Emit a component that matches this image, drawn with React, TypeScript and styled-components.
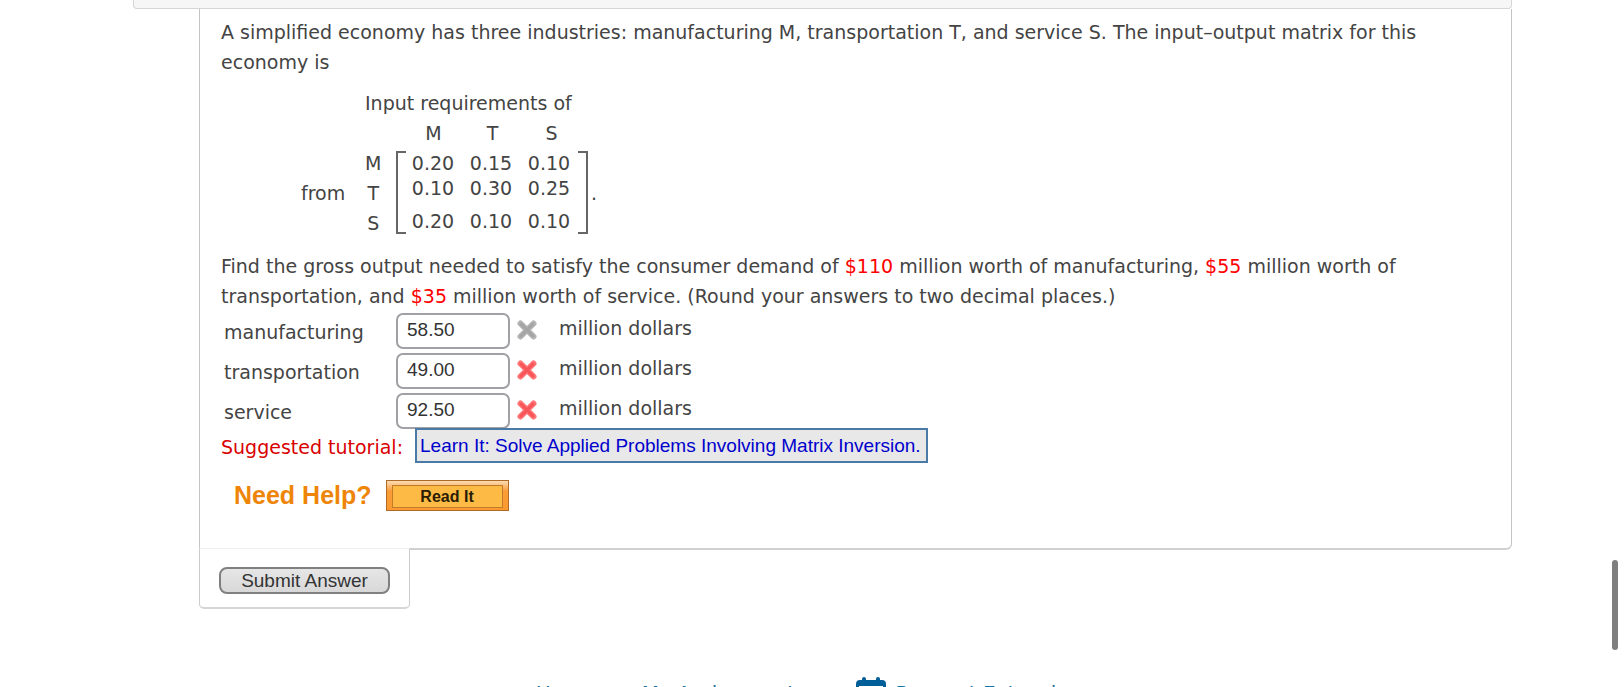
import React from "react";
import styled, { createGlobalStyle } from "styled-components";

const GlobalStyle = createGlobalStyle`
  * { box-sizing: border-box; }
  body {
    margin: 0;
    height: 100vh;
    overflow: hidden;
    background: #fff;
    color: #444;
    font-family: "DejaVu Sans", Verdana, sans-serif;
    font-size: 19px;
    line-height: 30px;
  }
`;

const Page = styled.main`
  padding: 0 112px 0 133px;
`;

const HeaderBar = styled.div`
  height: 9px;
  background: #f6f6f6;
  border: 1px solid #d6d6d6;
  border-top: 0;
  border-radius: 0 0 4px 4px;
`;

const Question = styled.section`
  margin-left: 66px;
`;

const Panel = styled.div`
  padding: 8px 21px 37px;
  border: 1px solid #c4c4c4;
  border-top: 0;
  border-bottom: 2px solid #d0d0d0;
  border-radius: 0 0 6px 0;
`;

const Paragraph = styled.p`
  margin: 0;
`;

const Amount = styled.span`
  color: #f00;
`;

const Matrix = styled.div`
  display: grid;
  grid-template-columns: 64px 31px 192px auto;
  margin: 11px 0 13px 80px;
`;

const MatrixCaption = styled.div`
  grid-column: 2 / -1;
`;

const ColumnHeads = styled.div`
  grid-column: 3;
  display: grid;
  grid-template-columns: repeat(3, 59px);
  padding-left: 8px;
  text-align: center;
`;

const FromLabel = styled.div`
  grid-column: 1;
  align-self: center;
`;

const RowHeads = styled.div`
  display: grid;
  grid-template-rows: repeat(3, 30px);
  width: 15px;
  text-align: center;
`;

const Brackets = styled.div`
  display: flex;
  justify-content: center;
  margin: 3px 0 4px;
  padding-right: 2px;
  background:
    linear-gradient(#666, #666) left top / 8px 2px no-repeat,
    linear-gradient(#666, #666) left bottom / 8px 2px no-repeat,
    linear-gradient(#666, #666) right top / 8px 2px no-repeat,
    linear-gradient(#666, #666) right bottom / 8px 2px no-repeat;
  border: solid #666;
  border-width: 0 2px;
`;

const Values = styled.table`
  border-collapse: collapse;
  line-height: 25px;
  td {
    width: 58px;
    padding: 0;
    text-align: center;
  }
  tr:last-child td {
    padding-top: 8px;
  }
`;

const Period = styled.div`
  align-self: center;
  padding-left: 3px;
`;

const AnswerList = styled.div`
  padding-top: 2px;
`;

const AnswerRow = styled.div`
  display: grid;
  grid-template-columns: 172px 120px 43px auto;
  align-items: start;
  height: 40px;
  padding-left: 3px;
`;

const AnswerLabel = styled.label`
  padding-top: 4px;
`;

const AnswerInput = styled.input`
  width: 114px;
  height: 36px;
  padding: 0 9px 2px;
  border: 2px solid #a0a0a5;
  border-radius: 7px;
  background: #fff;
  color: #333;
  font: 19px "Liberation Sans", Arial, sans-serif;
`;

const Mark = styled.svg`
  width: 22px;
  height: 22px;
  margin-top: 6px;
`;

const Tutorial = styled.div`
  display: flex;
  align-items: center;
  gap: 12px;
  margin-top: -5px;
  color: #d90000;
`;

const TutorialLink = styled.a`
  padding: 1px 5px 0 3px;
  border: 2px solid #4a7ba6;
  background: #e8e8e8;
  color: #0000cd;
  font-family: "Liberation Sans", Arial, sans-serif;
  text-decoration: none;
  white-space: nowrap;
`;

const TutorialLabel = styled.span`
  padding-top: 2px;
`;

const Help = styled.div`
  display: flex;
  align-items: center;
  gap: 14px;
  margin: 17px 0 0 13px;
  font-family: "Liberation Sans", Arial, sans-serif;
  font-weight: bold;
`;

const HelpTitle = styled.span`
  color: #ee8509;
  font-size: 25px;
  line-height: 28px;
  padding-bottom: 2px;
`;

const ReadButton = styled.button`
  width: 123px;
  height: 31px;
  padding: 4px 5px;
  border: 1px solid #b06a28;
  background: linear-gradient(#fbdcb4, #fb9c38 35%, #fb9a30);
  font: bold 16px/20px "Liberation Sans", Arial, sans-serif;
  color: #2a1c05;
`;

const ReadFace = styled.span`
  display: block;
  padding-top: 1px;
  border: 1px solid #c07c28;
  background: #fdbb45;
`;

const SubmitTab = styled.div`
  width: 211px;
  margin-top: -2px;
  padding: 18px 19px 13px;
  border: 1px solid #ccc;
  border-top-color: #eee;
  border-bottom: 2px solid #d6d6d6;
  border-radius: 0 0 5px 5px;
  background: #fff;
`;

const SubmitButton = styled.button`
  display: block;
  width: 100%;
  height: 27px;
  padding: 0;
  border: 2px solid #808080;
  border-radius: 8px;
  background: linear-gradient(#e6e6e6, #d8d8d8);
  color: #333;
  font: 19px/21px "Liberation Sans", Arial, sans-serif;
`;

const Footer = styled.footer`
  display: flex;
  justify-content: center;
  gap: 47px;
  margin: 68px 28px 0 0;
  font-size: 20px;
`;

const FooterLink = styled.a`
  display: flex;
  align-items: flex-start;
  gap: 9px;
  color: #1874a4;
  text-decoration: none;
  white-space: nowrap;
  svg {
    margin-left: 4px;
  }
  span {
    padding-top: 1px;
  }
`;

const ScrollThumb = styled.div`
  position: fixed;
  top: 560px;
  right: 6px;
  width: 6px;
  height: 90px;
  border-radius: 3px;
  background: #7f7f7f;
`;

const matrix = [
  ["0.20", "0.15", "0.10"],
  ["0.10", "0.30", "0.25"],
  ["0.20", "0.10", "0.10"],
];

const sectors = ["M", "T", "S"];

const answers = [
  { name: "manufacturing", value: "58.50", edge: "#b4b4b4", core: "#999" },
  { name: "transportation", value: "49.00", edge: "#ff7474", core: "#f43f46" },
  { name: "service", value: "92.50", edge: "#ff7474", core: "#f43f46" },
];

function CrossMark({ edge, core }: { edge: string; core: string }) {
  return (
    <Mark viewBox="0 0 22 22" role="img" aria-label="incorrect">
      <path d="M4.500 4.500 17.500 17.500M17.500 4.500 4.500 17.500" fill="none" stroke={edge} strokeWidth="6" strokeLinecap="round" />
      <path d="M5 5 17 17M17 5 5 17" fill="none" stroke={core} strokeWidth="3" strokeLinecap="round" opacity=".6" />
    </Mark>
  );
}

function CalendarIcon() {
  return (
    <svg width="30" height="32" viewBox="0 0 30 32" aria-hidden="true">
      <path fill="#005f99" fillRule="evenodd" d="M6 3V2a2 2 0 0 1 4 0v1h10V2a2 2 0 0 1 4 0v1h2a4 4 0 0 1 4 4v21a3 3 0 0 1-3 3H3a3 3 0 0 1-3-3V7a4 4 0 0 1 4-4ZM3 9v19h24V9Z" />
    </svg>
  );
}

export default function App() {
  return (
    <>
      <GlobalStyle />
      <Page>
        <HeaderBar />
        <Question>
          <Panel>
            <Paragraph>
              A simplified economy has three industries: manufacturing M, transportation T, and service S. The
              input–output matrix for this economy is
            </Paragraph>
            <Matrix>
              <MatrixCaption>Input requirements of</MatrixCaption>
              <ColumnHeads>
                {sectors.map((s) => <span key={s}>{s}</span>)}
              </ColumnHeads>
              <FromLabel>from</FromLabel>
              <RowHeads>
                {sectors.map((s) => <span key={s}>{s}</span>)}
              </RowHeads>
              <Brackets>
                <Values>
                  <tbody>
                    {matrix.map((row, i) => (
                      <tr key={i}>{row.map((v, j) => <td key={j}>{v}</td>)}</tr>
                    ))}
                  </tbody>
                </Values>
              </Brackets>
              <Period>.</Period>
            </Matrix>
            <Paragraph>
              Find the gross output needed to satisfy the consumer demand of <Amount>$110</Amount> million worth of
              manufacturing, <Amount>$55</Amount> million worth of transportation, and <Amount>$35</Amount> million
              worth of service. (Round your answers to two decimal places.)
            </Paragraph>
            <AnswerList>
              {answers.map((a) => (
                <AnswerRow key={a.name}>
                  <AnswerLabel htmlFor={a.name}>{a.name}</AnswerLabel>
                  <AnswerInput id={a.name} defaultValue={a.value} />
                  <CrossMark edge={a.edge} core={a.core} />
                  <span>million dollars</span>
                </AnswerRow>
              ))}
            </AnswerList>
            <Tutorial>
              <TutorialLabel>Suggested tutorial:</TutorialLabel>
              <TutorialLink href="#tutorial">Learn It: Solve Applied Problems Involving Matrix Inversion.</TutorialLink>
            </Tutorial>
            <Help>
              <HelpTitle>Need Help?</HelpTitle>
              <ReadButton type="button"><ReadFace>Read It</ReadFace></ReadButton>
            </Help>
          </Panel>
          <SubmitTab>
            <SubmitButton type="submit">Submit Answer</SubmitButton>
          </SubmitTab>
        </Question>
        <Footer>
          <FooterLink href="#home"><span>Home</span></FooterLink>
          <FooterLink href="#assignments"><span>My Assignments</span></FooterLink>
          <FooterLink href="#extension"><CalendarIcon /><span>Request Extension</span></FooterLink>
        </Footer>
      </Page>
      <ScrollThumb />
    </>
  );
}
